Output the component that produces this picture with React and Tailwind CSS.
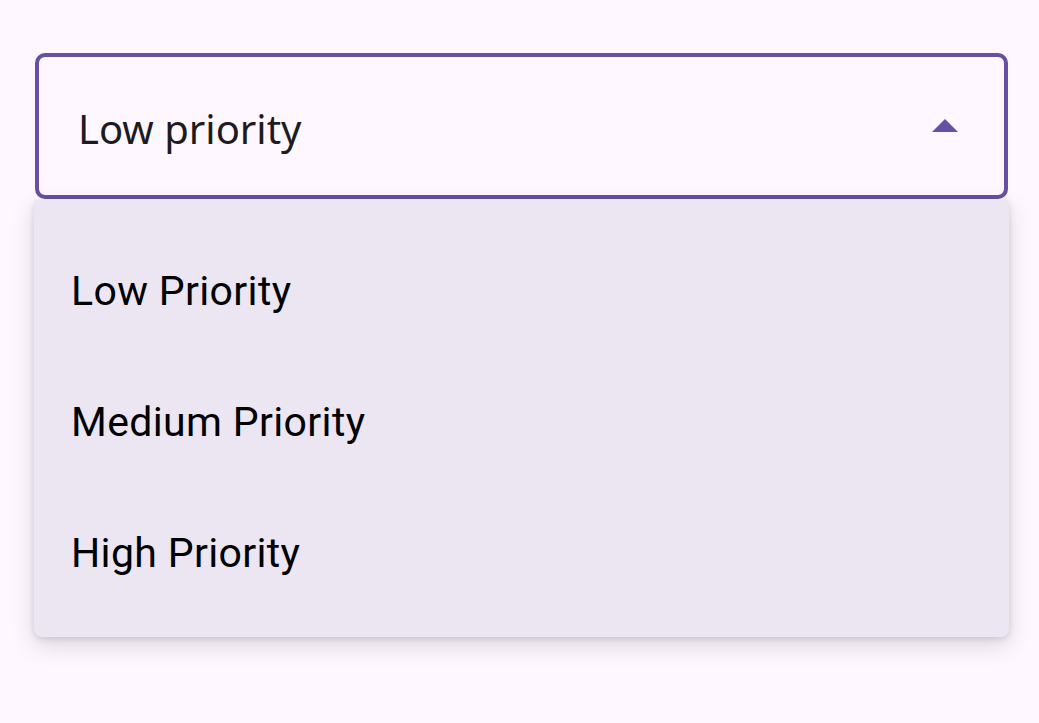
import * as React from "react"

const options = ["Low Priority", "Medium Priority", "High Priority"]

const App = () => {
  const [open, setOpen] = React.useState(true)

  return (
    <div
      className="w-[1039px] h-[723px] bg-[#fef7ff] overflow-hidden"
      style={{ fontFamily: "Roboto, 'Noto Sans', sans-serif" }}
    >
      <div className="flex flex-col pt-[53px] pl-[34px] w-[1009px]">
        {/* Text field */}
        <button
          type="button"
          onClick={() => setOpen(!open)}
          className="flex items-center justify-between h-[146px] mx-[1px] pl-[39px] pr-[46px] border-[4px] border-[#6750a4] rounded-[10px] bg-[#fef7ff] text-left"
        >
          <span className="mt-[6px] font-['Noto_Sans',sans-serif] text-[40px] text-[#1d1b20]">Low priority</span>
          <svg width="26" height="13" viewBox="0 0 26 13" className="mt-[-2px]">
            <path d="M0 13 L13 0 L26 13 Z" fill="#6750a4" />
          </svg>
        </button>

        {/* Menu */}
        {open && (
          <div className="mt-[1px] pt-[26px] pb-[18px] bg-[#ebe6f2] rounded-b-[8px] rounded-t-[3px] shadow-[0_8px_24px_rgba(0,0,0,0.14),0_2px_6px_rgba(0,0,0,0.12)]">
            {options.map(o => (
              <div
                key={o}
                className="flex items-center h-[131px] pl-[37px] text-[41px] text-black tracking-[0.35px]"
              >
                {o}
              </div>
            ))}
          </div>
        )}
      </div>
    </div>
  )
}

export default App
